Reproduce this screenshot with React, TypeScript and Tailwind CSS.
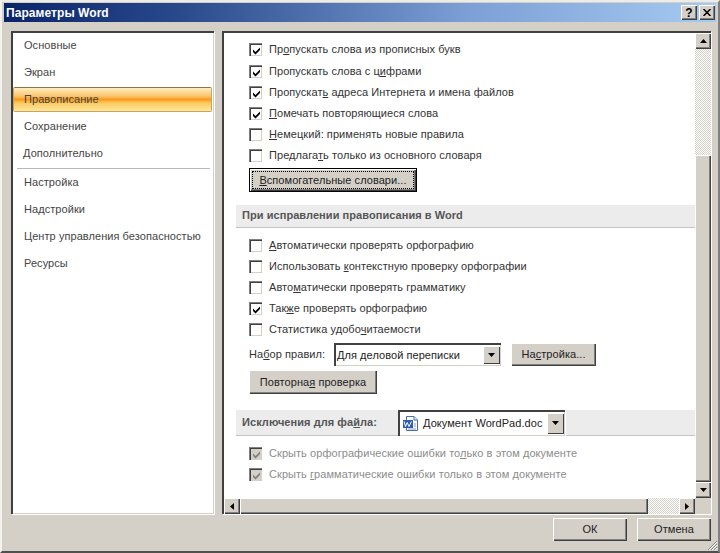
const FONT = "font-['Liberation_Sans',sans-serif]";
const RAISED = "bg-[#d4d0c8] shadow-[inset_1px_1px_0_#ffffff,inset_-1px_-1px_0_#404040,inset_-2px_-2px_0_#808080]";
const CHECKER = "bg-[repeating-conic-gradient(#ffffff_0_25%,#d4d0c8_0_50%)] bg-[length:2px_2px]";

function Accel({ text, at }: { text: string; at?: number }) {
  if (at === undefined) return <>{text}</>;
  return (
    <>
      {text.slice(0, at)}
      <u>{text[at]}</u>
      {text.slice(at + 1)}
    </>
  );
}

function Check({ checked, disabled }: { checked?: boolean; disabled?: boolean }) {
  return (
    <span
      className={`flex h-[13px] w-[13px] shrink-0 items-center justify-center border-t border-l border-t-[#808080] border-l-[#808080] shadow-[inset_1px_1px_0_#404040,inset_-1px_-1px_0_#d4d0c8,1px_1px_0_#ffffff] ${disabled ? "bg-[#d4d0c8]" : "bg-white"}`}
    >
      {checked && (
        <svg width="9" height="9" viewBox="0 0 9 9">
          <path d="M1 3.5 L3.5 6 L8 1.5 V4 L3.5 8.5 L1 6 Z" fill={disabled ? "#808080" : "#000000"} />
        </svg>
      )}
    </span>
  );
}

function Row({ label, at, checked, disabled, extra = "" }: { label: string; at?: number; checked?: boolean; disabled?: boolean; extra?: string }) {
  return (
    <div className={`flex h-[21px] items-center gap-[7px] pl-[13px] ${extra} ${disabled ? "text-[#8c8c8c]" : "text-[#333333]"}`}>
      <Check checked={checked} disabled={disabled} />
      <span className="whitespace-nowrap">
        <Accel text={label} at={at} />
      </span>
    </div>
  );
}

function Arrow({ dir }: { dir: "up" | "down" | "left" | "right" }) {
  const d = { up: "M0 4 L3.5 0 L7 4 Z", down: "M0 0 L7 0 L3.5 4 Z", left: "M5 0 V7 L1 3.5 Z", right: "M1 0 V7 L5 3.5 Z" }[dir];
  const vertical = dir === "up" || dir === "down";
  return (
    <svg width={vertical ? 7 : 6} height={vertical ? 4 : 7} viewBox={vertical ? "0 0 7 4" : "0 0 6 7"}>
      <path d={d} fill="#000000" />
    </svg>
  );
}

function ScrollBtn({ dir, className }: { dir: "up" | "down" | "left" | "right"; className: string }) {
  return (
    <div className={`flex shrink-0 items-center justify-center ${RAISED} ${className}`}>
      <Arrow dir={dir} />
    </div>
  );
}

function Btn({ label, at, className, focus }: { label: string; at?: number; className: string; focus?: boolean }) {
  return (
    <button
      className={`flex shrink-0 items-center justify-center whitespace-nowrap text-[#222222] ${focus ? "border border-black p-[2px]" : ""} ${RAISED} ${className}`}
    >
      <span className={focus ? "flex h-full w-full items-center justify-center border border-dotted border-black" : ""}>
        <Accel text={label} at={at} />
      </span>
    </button>
  );
}

function NavItem({ label, selected, inset = "pl-[11px]" }: { label: string; selected?: boolean; inset?: string }) {
  if (selected) {
    return (
      <div className="mr-[2px] mb-[2px] flex h-[25px] items-center rounded-[2px] border border-[#c9a45c] border-t-[#8c7448] bg-[linear-gradient(#fdeec2_0%,#fcc56e_35%,#f99a1c_50%,#fcc95f_65%,#fde89e_100%)] pl-[10px] text-[#444444]">
        {label}
      </div>
    );
  }
  return <div className={`flex h-[27px] items-center pb-[2px] text-[#444444] ${inset}`}>{label}</div>;
}

function Combo({ label, icon, className }: { label: string; icon?: boolean; className: string }) {
  return (
    <div className={`flex shrink-0 items-stretch border-t-2 border-l-2 border-t-[#404040] border-l-[#404040] bg-white font-normal shadow-[inset_-1px_-1px_0_#d4d0c8,1px_1px_0_#ffffff] ${className}`}>
      <div className={`flex min-w-0 flex-1 items-center text-[#222222] ${icon ? "gap-[4px] pl-[2px]" : "pl-[1px]"}`}>
        {icon && (
          <svg width="17" height="17" viewBox="0 0 17 17" className="shrink-0">
            <path d="M4.5 1.5 H12 L15.5 5 V15.5 H4.5 Z" fill="#ffffff" stroke="#4a6fa8" />
            <path d="M12 1.5 V5 H15.5" fill="#dce7f5" stroke="#4a6fa8" />
            <rect x="1" y="5" width="10" height="8" fill="#2f5fb3" />
            <path d="M2 6.5 L3.5 11.5 L5.2 7.5 L7 11.5 L9.5 6.5" fill="none" stroke="#ffffff" />
            <path d="M12 9 H14 M12 11 H14 M6 14 H14" stroke="#7d9ccc" />
          </svg>
        )}
        <span className="whitespace-nowrap">{label}</span>
      </div>
      <div className="m-[1px] mb-[2px] flex w-[17px] shrink-0 items-center justify-center bg-[#d4d0c8] shadow-[inset_1px_1px_0_#ffffff,inset_-1px_-1px_0_#404040]">
        <Arrow dir="down" />
      </div>
    </div>
  );
}

export default function App() {
  return (
    <div className={`relative flex h-[553px] w-[720px] flex-col overflow-hidden border-t-2 border-r-2 border-b-2 border-l-2 border-t-[#eeece6] border-r-[#808080] border-b-[#505050] border-l-[#f4f2ec] bg-[#d4d0c8] px-[2px] pt-[1px] text-[11px] tracking-[0.06px] ${FONT}`}>
      <div className="flex h-[19px] shrink-0 items-center justify-between bg-[linear-gradient(90deg,#0a246a_0%,#2a4a8c_25%,#7c9fd6_65%,#a6caf0_100%)] pr-[1px] pl-[2px]">
        <span className="pt-[1px] text-[12px] font-bold text-white">Параметры Word</span>
        <div className="flex gap-[2px]">
          <div className={`flex h-[15px] w-[16px] items-center justify-center text-[12px] leading-none font-bold text-black ${RAISED}`}>?</div>
          <div className={`flex h-[15px] w-[16px] items-center justify-center ${RAISED}`}>
            <svg width="8" height="7" viewBox="0 0 8 7">
              <path d="M0.5 0 L7.5 7 M7.5 0 L0.5 7" stroke="#000000" strokeWidth="1.5" />
            </svg>
          </div>
        </div>
      </div>

      <div className="flex min-h-0 flex-1 flex-col pt-[9px] pr-[5px] pl-[7px]">
        <div className="flex h-[483px] shrink-0 gap-[8px]">
          <div className="w-[203px] shrink-0 border-t-2 border-l-2 border-t-[#404040] border-l-[#404040] bg-white shadow-[inset_-1px_-1px_0_#d4d0c8,1px_1px_0_#ffffff]">
            <NavItem label="Основные" />
            <NavItem label="Экран" />
            <NavItem label="Правописание" selected />
            <NavItem label="Сохранение" />
            <NavItem label="Дополнительно" inset="pl-[10px]" />
            <div className="mx-[4px] mb-[1px] h-[1px] bg-[#b8b8b8]" />
            <NavItem label="Настройка" />
            <NavItem label="Надстройки" />
            <NavItem label="Центр управления безопасностью" />
            <NavItem label="Ресурсы" />
          </div>

          <div className="flex min-w-0 flex-1 flex-col border-t-2 border-l-2 border-t-[#404040] border-l-[#404040] bg-white shadow-[1px_1px_0_#ffffff]">
            <div className="flex min-h-0 flex-1">
              <div className="min-w-0 flex-1 pl-[12px]">
                <div className="pt-[6px]">
                  <Row label="Пропускать слова из прописных букв" at={2} checked extra="mb-[1px]" />
                  <Row label="Пропускать слова с цифрами" at={20} checked />
                  <Row label="Пропускать адреса Интернета и имена файлов" at={9} checked />
                  <Row label="Помечать повторяющиеся слова" at={0} checked />
                  <Row label="Немецкий: применять новые правила" at={0} />
                  <Row label="Предлагать только из основного словаря" at={8} />
                </div>
                <div className="pt-[2px] pl-[13px]">
                  <Btn label="Вспомогательные словари..." at={0} focus className="h-[24px] w-[168px]" />
                </div>
                <div className="mt-[13px] flex h-[23px] items-center border-b border-b-[#c4c4c4] bg-[#ececec] pb-[2px] pl-[6px] font-bold text-[#555555]">
                  При исправлении правописания в Word
                </div>
                <div className="pt-[7px]">
                  <Row label="Автоматически проверять орфографию" at={0} />
                  <Row label="Использовать контекстную проверку орфографии" at={13} />
                  <Row label="Автоматически проверять грамматику" at={4} />
                  <Row label="Также проверять орфографию" at={3} checked />
                  <Row label="Статистика удобочитаемости" at={16} />
                </div>
                <div className="flex items-center pt-[3px] pl-[13px] text-[#333333]">
                  <span className="w-[85px] whitespace-nowrap"><Accel text="Набор правил:" at={2} /></span>
                  <Combo label="Для деловой переписки" className="h-[23px] w-[167px]" />
                  <Btn label="Настройка..." at={2} className="ml-[10px] h-[23px] w-[85px]" />
                </div>
                <div className="pt-[4px] pl-[13px]">
                  <Btn label="Повторная проверка" at={8} className="h-[24px] w-[128px]" />
                </div>
                <div className="mt-[16px] flex h-[26px] items-center border-b border-b-[#c4c4c4] bg-[#ececec] pl-[6px] font-bold text-[#555555]">
                  <span className="w-[156px] whitespace-nowrap"><Accel text="Исключения для файла:" at={17} /></span>
                  <Combo label="Документ WordPad.doc" icon className="h-[26px] w-[167px]" />
                </div>
                <div className="pt-[7px]">
                  <Row label="Скрыть орфографические ошибки только в этом документе" at={32} checked disabled />
                  <Row label="Скрыть грамматические ошибки только в этом документе" at={7} checked disabled />
                </div>
              </div>
              <div className="flex w-[16px] shrink-0 flex-col">
                <ScrollBtn dir="up" className="h-[16px]" />
                <div className={`h-[106px] shrink-0 ${CHECKER}`} />
                <div className={`flex-1 ${RAISED}`} />
                <ScrollBtn dir="down" className="h-[16px]" />
              </div>
            </div>
            <div className="flex h-[16px] shrink-0">
              <ScrollBtn dir="left" className="w-[16px]" />
              <div className={`w-[408px] shrink-0 ${RAISED}`} />
              <div className={`flex-1 ${CHECKER}`} />
              <ScrollBtn dir="right" className="w-[16px]" />
              <div className="w-[16px] shrink-0 bg-[#d4d0c8]" />
            </div>
          </div>
        </div>

        <div className="flex justify-end gap-[10px] pt-[4px]">
          <Btn label="ОК" className="h-[23px] w-[74px]" />
          <Btn label="Отмена" className="h-[23px] w-[74px]" />
        </div>
      </div>

      <svg width="12" height="12" viewBox="0 0 12 12" className="absolute right-0 bottom-0">
        <path d="M11 2 L2 11 M11 5 L5 11 M11 8 L8 11" stroke="#808080" />
        <path d="M11 3 L3 11 M11 6 L6 11 M11 9 L9 11" stroke="#ffffff" />
      </svg>
    </div>
  );
}
